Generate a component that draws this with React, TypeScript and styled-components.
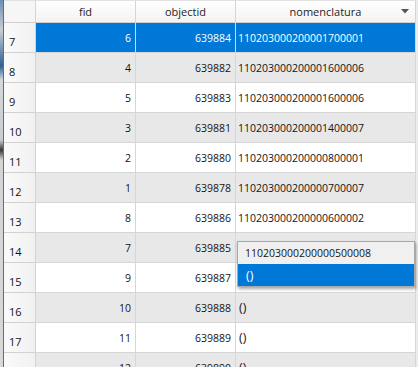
import React from "react";
import styled, { createGlobalStyle } from "styled-components";

const Global = createGlobalStyle`
  html, body { margin: 0; padding: 0; background: #f0f0f0; overflow: hidden; }
  body { font-family: "Open Sans", "Noto Sans", sans-serif; }
`;

const Page = styled.div`
  position: relative;
  display: flex;
  width: 418px;
  height: 367px;
  overflow: hidden;
  background: #ececec;
`;

const Strip = styled.div`
  width: 3px;
  flex: none;
  border-right: 1px solid #6b6b6b;
  background: linear-gradient(
    to bottom,
    #6d8fb0 0px,
    #c9ced4 30px,
    #2f5f92 66px,
    #d6d9dc 80px,
    #c8cbcf 140px,
    #3a3a3a 150px,
    #d2d4d6 160px,
    #d8d8d8 367px
  );
`;

const Grid = styled.div`
  display: grid;
  grid-template-columns: 32px 100px 100px 180px;
  grid-auto-rows: 30px;
  grid-template-rows: 23px;
  align-content: start;
  flex: none;
  font-size: 10.5px;
  color: #141414;
`;

const HeadCell = styled.div<{ $corner?: boolean }>`
  box-sizing: border-box;
  display: flex;
  align-items: center;
  justify-content: center;
  border-right: 1px solid #d5d5d5;
  border-bottom: 1px solid #d0d0d0;
  border-top: 1px solid #e2e2e2;
  background: ${(p) => (p.$corner ? "#f6f6f6" : "linear-gradient(to bottom, #ffffff, #f3f3f3)")};
  position: relative;
  font-size: 11px;
  color: #1e1e1e;
  padding-bottom: 1px;
`;

const SortArrow = styled.svg`
  position: absolute;
  right: 6px;
  top: 8px;
`;

const RowHead = styled.div`
  box-sizing: border-box;
  display: flex;
  align-items: center;
  padding: 8px 0 0 5px;
  border-right: 1px solid #d2d2d2;
  border-bottom: 1px solid #d2d2d2;
  background: linear-gradient(to right, #fafafa, #f1f1f1);
  font-size: 11px;
`;

const Cell = styled.div<{ $tone: "sel" | "odd" | "even"; $align: "left" | "right"; $big?: boolean }>`
  box-sizing: border-box;
  display: flex;
  align-items: center;
  justify-content: ${(p) => (p.$align === "right" ? "flex-end" : "flex-start")};
  padding: ${(p) => (p.$align === "right" ? "0 4px 0 0" : p.$big ? "0 0 0 3px" : "0 0 0 2px")};
  border-right: 1px solid ${(p) => (p.$tone === "sel" ? "#d8d8d8" : "#d6d6d6")};
  border-bottom: 1px solid #d6d6d6;
  background: ${(p) => (p.$tone === "sel" ? "#0078d7" : p.$tone === "odd" ? "#ffffff" : "#e8e8e8")};
  color: ${(p) => (p.$tone === "sel" ? "#ffffff" : "#141414")};
  font-size: ${(p) => (p.$big ? "12.5px" : "10.5px")};
  white-space: nowrap;
  overflow: hidden;
`;

const Popup = styled.div`
  position: absolute;
  left: 237px;
  top: 241px;
  width: 178px;
  box-sizing: border-box;
  border: 1px solid #a9a9a9;
  background: #f0f0f0;
  box-shadow: 1px 2px 3px rgba(0, 0, 0, 0.35);
  font-size: 10.5px;
`;

const PopItem = styled.div<{ $sel?: boolean }>`
  height: 22px;
  display: flex;
  align-items: center;
  padding-left: ${(p) => (p.$sel ? "8px" : "7px")};
  background: ${(p) => (p.$sel ? "#0078d7" : "#f0f0f0")};
  color: ${(p) => (p.$sel ? "#ffffff" : "#141414")};
  font-size: ${(p) => (p.$sel ? "12.5px" : "10.5px")};
`;

const rows: [string, string, string, string][] = [
  ["7", "6", "639884", "110203000200001700001"],
  ["8", "4", "639882", "110203000200001600006"],
  ["9", "5", "639883", "110203000200001600006"],
  ["10", "3", "639881", "110203000200001400007"],
  ["11", "2", "639880", "110203000200000800001"],
  ["12", "1", "639878", "110203000200000700007"],
  ["13", "8", "639886", "110203000200000600002"],
  ["14", "7", "639885", ""],
  ["15", "9", "639887", ""],
  ["16", "10", "639888", "()"],
  ["17", "11", "639889", "()"],
  ["18", "12", "639890", "()"],
];

export default function App() {
  return (
    <>
      <Global />
      <Page>
        <Strip />
        <Grid>
          <HeadCell $corner />
          <HeadCell>fid</HeadCell>
          <HeadCell>objectid</HeadCell>
          <HeadCell>
            nomenclatura
            <SortArrow width="8" height="5" viewBox="0 0 8 5">
              <path d="M0 0 L8 0 L4 4.5 Z" fill="#555" />
            </SortArrow>
          </HeadCell>
          {rows.map((r, i) => {
            const tone = i === 0 ? "sel" : i % 2 === 0 ? "odd" : "even";
            return (
              <React.Fragment key={r[0]}>
                <RowHead>{r[0]}</RowHead>
                <Cell $tone={tone} $align="right">{r[1]}</Cell>
                <Cell $tone={tone} $align="right">{r[2]}</Cell>
                <Cell $tone={tone} $align="left" $big={r[3] === "()"}>{r[3]}</Cell>
              </React.Fragment>
            );
          })}
        </Grid>
        <Popup>
          <PopItem>110203000200000500008</PopItem>
          <PopItem $sel>()</PopItem>
        </Popup>
      </Page>
    </>
  );
}
